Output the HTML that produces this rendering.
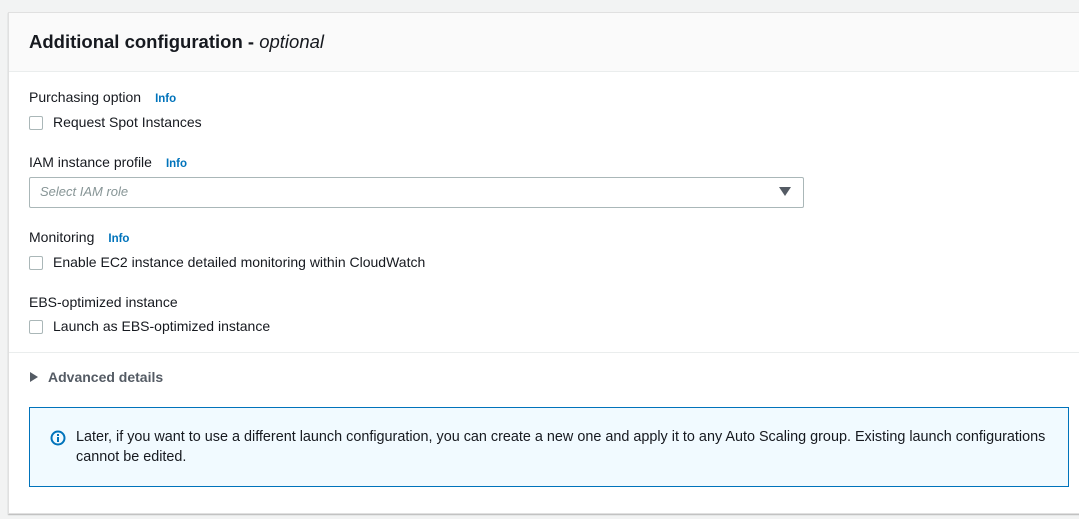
<!DOCTYPE html>
<html><head><style>
body{margin:0;width:1079px;height:519px;background:#f2f3f3;font-family:"Liberation Sans",sans-serif;color:#16191f;position:relative;overflow:hidden;font-size:14px}
.card{position:absolute;left:8px;top:12px;width:1090px;height:500px;background:#fff;border:1px solid #e0e0e0;box-shadow:0 1px 1px rgba(0,0,0,.25)}
.hdr{height:58px;background:#fafafa;border-bottom:1px solid #eaeded}
.abs{position:absolute;white-space:nowrap}
.info{color:#0073bb;font-weight:bold;font-size:11.5px;margin-left:14px}
.cb{position:absolute;width:12px;height:12px;border:1px solid #aab7b8;border-radius:2px;background:#fff}
</style></head><body>
<div class="card"><div class="hdr"></div></div>
<div class="abs" style="left:29px;top:31px;font-size:18.5px;font-weight:bold">Additional configuration - <i style="font-weight:normal">optional</i></div>
<div class="abs" style="left:29px;top:89px">Purchasing option<span class="info">Info</span></div>
<div class="cb" style="left:29px;top:116px"></div>
<div class="abs" style="left:53px;top:114px">Request Spot Instances</div>
<div class="abs" style="left:29px;top:154px">IAM instance profile<span class="info">Info</span></div>
<div class="abs" style="left:29px;top:177px;width:773px;height:29px;border:1px solid #aab7b8;border-radius:2px"></div>
<div class="abs" style="left:40px;top:184px;color:#879596;font-style:italic;font-size:13px">Select IAM role</div>
<div class="abs" style="left:779px;top:187px;width:0;height:0;border-left:6px solid transparent;border-right:6px solid transparent;border-top:9px solid #545b64"></div>
<div class="abs" style="left:29px;top:229px">Monitoring<span class="info">Info</span></div>
<div class="cb" style="left:29px;top:256px"></div>
<div class="abs" style="left:53px;top:254px">Enable EC2 instance detailed monitoring within CloudWatch</div>
<div class="abs" style="left:29px;top:294px">EBS-optimized instance</div>
<div class="cb" style="left:29px;top:320px"></div>
<div class="abs" style="left:53px;top:318px">Launch as EBS-optimized instance</div>
<div class="abs" style="left:9px;top:352px;width:1070px;height:1px;background:#eaeded"></div>
<div class="abs" style="left:30px;top:372px;width:0;height:0;border-top:5px solid transparent;border-bottom:5px solid transparent;border-left:8px solid #545b64"></div>
<div class="abs" style="left:48px;top:369px;font-weight:bold;color:#545b64">Advanced details</div>
<div class="abs" style="left:29px;top:407px;width:1038px;height:78px;border:1px solid #0073bb;background:#f1faff"></div>
<svg class="abs" style="left:50px;top:430px" width="16" height="16" viewBox="0 0 16 16"><circle cx="8" cy="8" r="6.5" fill="none" stroke="#0073bb" stroke-width="2"/><rect x="7" y="7" width="2" height="5" fill="#0073bb"/><rect x="7" y="4" width="2" height="2" fill="#0073bb"/></svg>
<div class="abs" style="left:76px;top:427px;font-size:14.4px;line-height:20px">Later, if you want to use a different launch configuration, you can create a new one and apply it to any Auto Scaling group. Existing launch configurations<br>cannot be edited.</div>
</body></html>
